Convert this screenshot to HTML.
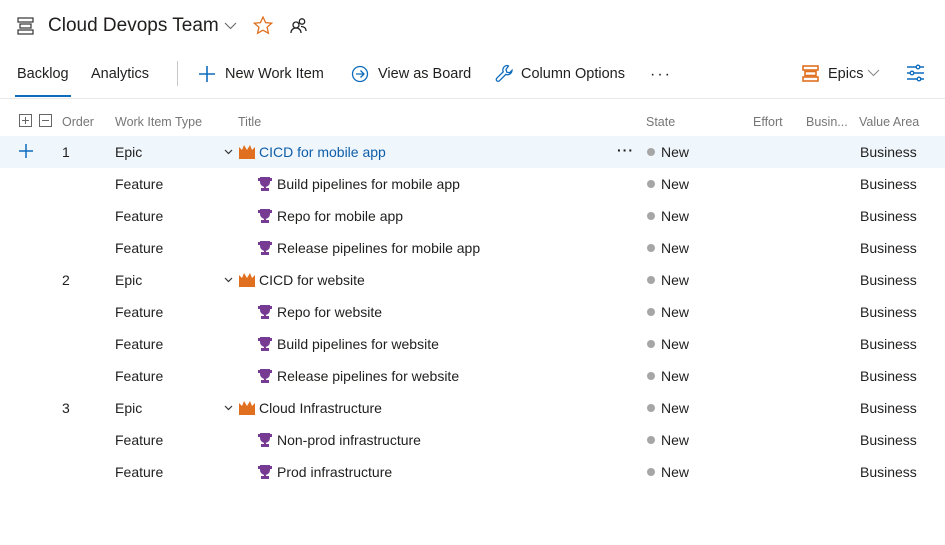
<!DOCTYPE html>
<html><head><meta charset="utf-8"><style>
*{margin:0;padding:0;box-sizing:border-box}
body{width:945px;height:545px;background:#fff;font-family:"Liberation Sans",sans-serif;color:#201f1e;position:relative;overflow:hidden;font-size:14px}
.a{position:absolute;white-space:nowrap}
.hd{color:#767676;font-size:12.5px;top:115px}
.row{position:absolute;left:0;width:945px;height:32px}
.row span{position:absolute;top:8px;white-space:nowrap;font-size:14px}
.dot{position:absolute;left:647px;top:12px;width:8px;height:8px;border-radius:50%;background:#a6a6a6}
.cr{position:absolute;left:239px;top:9px}
.tr{position:absolute;left:258px;top:9px}
.ch{position:absolute;left:224px;top:13px}
.tb{top:66px;font-size:14.5px}
</style></head><body>
<svg class="a" style="left:17px;top:17px" width="18" height="18" viewBox="0 0 18 18" fill="none" stroke="#333" stroke-width="1.2"><rect x="1" y="1" width="15" height="4"/><rect x="3" y="7" width="11" height="4"/><rect x="1" y="13" width="15" height="4"/></svg>
<div class="a" style="left:48px;top:15px;font-size:19px">Cloud Devops Team</div>
<svg class="a" style="left:224px;top:22px" width="13" height="8" viewBox="0 0 13 8" fill="none" stroke="#666" stroke-width="1.1"><path d="M1 1l5.5 5.5L12 1"/></svg>
<svg class="a" style="left:253px;top:16px" width="20" height="19" viewBox="0 0 20 19" fill="none" stroke="#e07020" stroke-width="1.3"><path d="M10 1l2.6 5.6 6 .6-4.5 4 1.3 6L10 14.2 4.6 17.2l1.3-6-4.5-4 6-.6z"/></svg>
<svg class="a" style="left:290px;top:17px" width="18" height="17" viewBox="0 0 18 17" fill="none" stroke="#222" stroke-width="1.3"><circle cx="6" cy="8" r="3"/><path d="M1 16c0-3 2-5 5-5s5 2 5 5"/><circle cx="12" cy="4.5" r="2.7"/><path d="M11 9.5c3 0 5 1.5 5 4.5"/></svg>
<div class="a tb" style="left:17px">Backlog</div>
<div style="position:absolute;left:15px;top:95px;width:56px;height:2px;background:#0f6cbd"></div>
<div class="a tb" style="left:91px">Analytics</div>
<div style="position:absolute;left:177px;top:61px;width:1px;height:25px;background:#c8c8c8"></div>
<svg class="a" style="left:198px;top:65px" width="18" height="18" viewBox="0 0 18 18" stroke="#0f6cbd" stroke-width="1.6"><path d="M9 1v16M1 9h16"/></svg>
<div class="a tb" style="left:225px">New Work Item</div>
<svg class="a" style="left:351px;top:65px" width="18" height="18" viewBox="0 0 18 18" fill="none" stroke="#0f6cbd" stroke-width="1.3"><circle cx="9" cy="9" r="7.5"/><path d="M5 9h8M9.5 5.5L13 9l-3.5 3.5"/></svg>
<div class="a tb" style="left:378px">View as Board</div>
<svg class="a" style="left:495px;top:64px" width="19" height="19" viewBox="0 0 19 19" fill="none" stroke="#0f6cbd" stroke-width="1.3"><path d="M12 1.5a4.5 4.5 0 0 0-3.8 6.3L1.8 14.2a1.8 1.8 0 0 0 2.6 2.6l6.4-6.4A4.5 4.5 0 0 0 17 6.3l-2.5 2.5-2.8-.7-.7-2.8L13.5 2.1A4.5 4.5 0 0 0 12 1.5z"/></svg>
<div class="a tb" style="left:521px">Column Options</div>
<div class="a" style="left:650px;top:66px;font-size:16px;letter-spacing:2px">···</div>
<svg class="a" style="left:802px;top:65px" width="18" height="17" viewBox="0 0 18 17" fill="none" stroke="#e07020" stroke-width="1.6"><rect x="1" y="1" width="15" height="4"/><rect x="3" y="6.5" width="11" height="4"/><rect x="1" y="12" width="15" height="4"/></svg>
<div class="a tb" style="left:828px">Epics</div>
<svg class="a" style="left:867px;top:69px" width="13" height="8" viewBox="0 0 13 8" fill="none" stroke="#888" stroke-width="1.1"><path d="M1 1l5.5 5.5L12 1"/></svg>
<svg class="a" style="left:906px;top:64px" width="19" height="18" viewBox="0 0 19 18" fill="none" stroke="#0f6cbd" stroke-width="1.4"><path d="M1 3h17M1 9h17M1 15h17"/><circle cx="12" cy="3" r="1.8" fill="#fff"/><circle cx="6" cy="9" r="1.8" fill="#fff"/><circle cx="13" cy="15" r="1.8" fill="#fff"/></svg>
<div style="position:absolute;left:0;top:98px;width:945px;height:1px;background:#e8e8e8"></div>
<svg class="a" style="left:19px;top:114px" width="34" height="13" viewBox="0 0 34 13" fill="none" stroke="#666" stroke-width="1"><rect x=".5" y=".5" width="12" height="12"/><path d="M3 6.5h7M6.5 3v7"/><rect x="20.5" y=".5" width="12" height="12"/><path d="M23 6.5h7"/></svg>
<div class="a hd" style="left:62px">Order</div>
<div class="a hd" style="left:115px">Work Item Type</div>
<div class="a hd" style="left:238px">Title</div>
<div class="a hd" style="left:646px">State</div>
<div class="a hd" style="left:753px">Effort</div>
<div class="a hd" style="left:806px">Busin...</div>
<div class="a hd" style="left:859px">Value Area</div>

<div class="row" style="top:136px;background:#eff6fc">
<svg style="position:absolute;left:18px;top:7px" width="16" height="16" viewBox="0 0 16 16" stroke="#0f6cbd" stroke-width="1.5"><path d="M8 1v14M1 8h14"/></svg>
<span style="left:62px">1</span><span style="left:115px">Epic</span>
<svg class="ch" width="9" height="6" viewBox="0 0 9 6" fill="none" stroke="#333" stroke-width="1.2"><path d="M1 1l3.5 3.5L8 1"/></svg>
<svg class="cr" width="16" height="14" viewBox="0 0 16 14" fill="#e07020"><path d="M0 2l3 3 2-5 3 5 3-5 2 5 3-3v12H0z"/></svg>
<span style="left:259px;color:#0f5ea8">CICD for mobile app</span>
<span style="left:617px;top:6px;font-weight:bold;letter-spacing:1px">···</span>
<div class="dot"></div><span style="left:661px">New</span><span style="left:860px">Business</span></div>

<div class="row" style="top:168px"><span style="left:115px">Feature</span><svg class="tr" width="14" height="14" viewBox="0 0 14 14" fill="#773b93"><path d="M2 0h10v5a5 5 0 0 1-10 0zM0 1h2v3H0zM12 1h2v3h-2zM6 9h2v2H6zM3 11h8v3H3z"/></svg><span style="left:277px">Build pipelines for mobile app</span><div class="dot"></div><span style="left:661px">New</span><span style="left:860px">Business</span></div>
<div class="row" style="top:200px"><span style="left:115px">Feature</span><svg class="tr" width="14" height="14" viewBox="0 0 14 14" fill="#773b93"><path d="M2 0h10v5a5 5 0 0 1-10 0zM0 1h2v3H0zM12 1h2v3h-2zM6 9h2v2H6zM3 11h8v3H3z"/></svg><span style="left:277px">Repo for mobile app</span><div class="dot"></div><span style="left:661px">New</span><span style="left:860px">Business</span></div>
<div class="row" style="top:232px"><span style="left:115px">Feature</span><svg class="tr" width="14" height="14" viewBox="0 0 14 14" fill="#773b93"><path d="M2 0h10v5a5 5 0 0 1-10 0zM0 1h2v3H0zM12 1h2v3h-2zM6 9h2v2H6zM3 11h8v3H3z"/></svg><span style="left:277px">Release pipelines for mobile app</span><div class="dot"></div><span style="left:661px">New</span><span style="left:860px">Business</span></div>

<div class="row" style="top:264px"><span style="left:62px">2</span><span style="left:115px">Epic</span><svg class="ch" width="9" height="6" viewBox="0 0 9 6" fill="none" stroke="#333" stroke-width="1.2"><path d="M1 1l3.5 3.5L8 1"/></svg><svg class="cr" width="16" height="14" viewBox="0 0 16 14" fill="#e07020"><path d="M0 2l3 3 2-5 3 5 3-5 2 5 3-3v12H0z"/></svg><span style="left:259px">CICD for website</span><div class="dot"></div><span style="left:661px">New</span><span style="left:860px">Business</span></div>
<div class="row" style="top:296px"><span style="left:115px">Feature</span><svg class="tr" width="14" height="14" viewBox="0 0 14 14" fill="#773b93"><path d="M2 0h10v5a5 5 0 0 1-10 0zM0 1h2v3H0zM12 1h2v3h-2zM6 9h2v2H6zM3 11h8v3H3z"/></svg><span style="left:277px">Repo for website</span><div class="dot"></div><span style="left:661px">New</span><span style="left:860px">Business</span></div>
<div class="row" style="top:328px"><span style="left:115px">Feature</span><svg class="tr" width="14" height="14" viewBox="0 0 14 14" fill="#773b93"><path d="M2 0h10v5a5 5 0 0 1-10 0zM0 1h2v3H0zM12 1h2v3h-2zM6 9h2v2H6zM3 11h8v3H3z"/></svg><span style="left:277px">Build pipelines for website</span><div class="dot"></div><span style="left:661px">New</span><span style="left:860px">Business</span></div>
<div class="row" style="top:360px"><span style="left:115px">Feature</span><svg class="tr" width="14" height="14" viewBox="0 0 14 14" fill="#773b93"><path d="M2 0h10v5a5 5 0 0 1-10 0zM0 1h2v3H0zM12 1h2v3h-2zM6 9h2v2H6zM3 11h8v3H3z"/></svg><span style="left:277px">Release pipelines for website</span><div class="dot"></div><span style="left:661px">New</span><span style="left:860px">Business</span></div>

<div class="row" style="top:392px"><span style="left:62px">3</span><span style="left:115px">Epic</span><svg class="ch" width="9" height="6" viewBox="0 0 9 6" fill="none" stroke="#333" stroke-width="1.2"><path d="M1 1l3.5 3.5L8 1"/></svg><svg class="cr" width="16" height="14" viewBox="0 0 16 14" fill="#e07020"><path d="M0 2l3 3 2-5 3 5 3-5 2 5 3-3v12H0z"/></svg><span style="left:259px">Cloud Infrastructure</span><div class="dot"></div><span style="left:661px">New</span><span style="left:860px">Business</span></div>
<div class="row" style="top:424px"><span style="left:115px">Feature</span><svg class="tr" width="14" height="14" viewBox="0 0 14 14" fill="#773b93"><path d="M2 0h10v5a5 5 0 0 1-10 0zM0 1h2v3H0zM12 1h2v3h-2zM6 9h2v2H6zM3 11h8v3H3z"/></svg><span style="left:277px">Non-prod infrastructure</span><div class="dot"></div><span style="left:661px">New</span><span style="left:860px">Business</span></div>
<div class="row" style="top:456px"><span style="left:115px">Feature</span><svg class="tr" width="14" height="14" viewBox="0 0 14 14" fill="#773b93"><path d="M2 0h10v5a5 5 0 0 1-10 0zM0 1h2v3H0zM12 1h2v3h-2zM6 9h2v2H6zM3 11h8v3H3z"/></svg><span style="left:277px">Prod infrastructure</span><div class="dot"></div><span style="left:661px">New</span><span style="left:860px">Business</span></div>
</body></html>
